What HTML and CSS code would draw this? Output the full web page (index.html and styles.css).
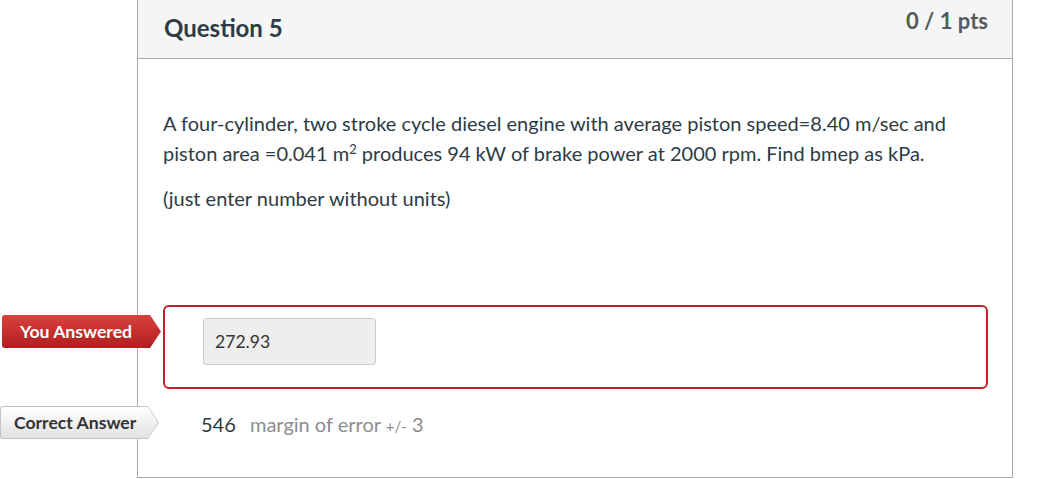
FILE: index.html
```html
<!DOCTYPE html>
<html lang="en">
<head>
<meta charset="utf-8">
<title>Question 5</title>
<link rel="stylesheet" href="styles.css">
</head>
<body>
<div class="page">
  <div class="card">
    <header class="qhead">
      <h2 class="qtitle">Question 5</h2>
      <span class="pts">0 / 1 pts</span>
    </header>
    <div class="qbody">
      <div class="qtext">
        <p>A four-cylinder, two stroke cycle diesel engine with average piston speed=8.40 m/sec and piston area =0.041 m<sup>2</sup> produces 94 kW of brake power at 2000 rpm. Find bmep as kPa.</p>
        <p>(just enter number without units)</p>
      </div>
      <div class="answer answer-wrong">
        <span class="flag flag-you">You Answered</span>
        <div class="answer-box">
          <div class="answer-input">272.93</div>
        </div>
      </div>
      <div class="answer answer-right">
        <span class="flag flag-correct"><span class="flag-inner">Correct Answer</span></span>
        <div class="correct-val">
          <span class="num">546</span>
          <span class="moe">margin of error <span class="pm">+/-</span> 3</span>
        </div>
      </div>
    </div>
  </div>
</div>
</body>
</html>
```

FILE: styles.css
```css
html, body {
  margin: 0;
  padding: 0;
  background: #ffffff;
}

body {
  font-family: Lato, "Open Sans", "Liberation Sans", sans-serif;
  color: #2d3b45;
}

.page {
  padding-left: 137px;
}

.card {
  width: 876px;
  box-sizing: border-box;
  border: 1px solid #aaaaaa;
  border-top: none;
  padding-bottom: 28px;
}

.qhead {
  height: 58px;
  background: #f5f5f5;
  border-bottom: 1px solid #aaaaaa;
  display: flex;
  justify-content: space-between;
  align-items: flex-start;
  padding: 0 24px 0 26px;
}

.qtitle {
  margin: 0;
  padding-top: 13px;
  font-size: 24px;
  line-height: 30px;
  font-weight: 700;
  color: #2d3b45;
}

.pts {
  padding-top: 7px;
  font-size: 22px;
  line-height: 28px;
  font-weight: 700;
  color: #555a5e;
}

.qbody {
  padding: 0 24px 0 25px;
}

.qtext {
  padding-top: 49px;
  font-size: 20px;
  line-height: 30px;
}

.qtext p {
  margin: 0 0 15px;
}

.qtext sup {
  font-size: 13px;
  line-height: 0;
  vertical-align: 7px;
}

.answer {
  position: relative;
}

.answer-wrong {
  margin-top: 92px;
}

.answer-box {
  height: 84px;
  box-sizing: border-box;
  border: 2px solid #c81f27;
  border-radius: 6px;
  padding: 11px 0 0 38px;
}

.answer-input {
  width: 173px;
  height: 47px;
  box-sizing: border-box;
  background: #eeeeee;
  border: 1px solid #cccccc;
  border-radius: 3px;
  padding-left: 11px;
  font-size: 17.6px;
  line-height: 45px;
  color: #333333;
}

.flag {
  position: absolute;
  display: flex;
  align-items: center;
  box-sizing: border-box;
  width: 159px;
  height: 33px;
  font-size: 17.6px;
  font-weight: 700;
  white-space: nowrap;
}

.flag-you {
  left: -161px;
  top: 10px;
  padding-left: 18px;
  color: #ffffff;
  background: linear-gradient(#d8423d, #b21e20);
  border-radius: 3px 0 0 3px;
  clip-path: polygon(0 0, 148px 0, 100% 50%, 148px 100%, 0 100%);
  text-shadow: 0 1px 0 rgba(0, 0, 0, 0.15);
}

.answer-right {
  margin-top: 12px;
  height: 48px;
  display: flex;
  align-items: center;
}

.flag-correct {
  left: -163px;
  top: 5px;
  background: #c4c4c4;
  border-radius: 3px 0 0 3px;
  clip-path: polygon(0 0, 148px 0, 100% 50%, 148px 100%, 0 100%);
  padding: 1px;
}

.flag-inner {
  display: flex;
  align-items: center;
  width: 100%;
  height: 100%;
  box-sizing: border-box;
  padding-left: 13px;
  background: linear-gradient(#ffffff, #e2e2e2);
  border-radius: 2px 0 0 2px;
  clip-path: polygon(0 0, 147px 0, 100% 50%, 147px 100%, 0 100%);
  color: #333333;
}

.correct-val {
  padding-left: 38px;
  font-size: 20px;
  line-height: 24px;
}

.num {
  color: #2d3b45;
  margin-right: 9px;
}

.moe {
  color: #8c8c8c;
}

.pm {
  font-size: 15px;
}
```
